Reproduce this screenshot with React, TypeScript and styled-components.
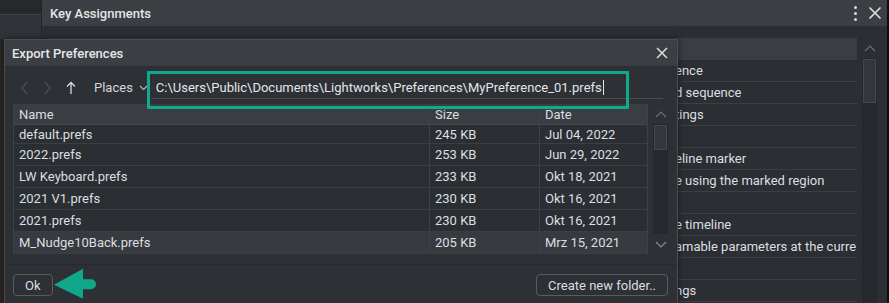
import styled, { createGlobalStyle } from "styled-components"

const GlobalStyle = createGlobalStyle`
  html, body {
    margin: 0;
    padding: 0;
    background: #1c1e21;
  }
  body {
    font-family: Roboto, "Noto Sans", sans-serif;
    font-size: 13px;
    color: #dcdee0;
  }
`

const keyRows = [
  "ence",
  "d sequence",
  "tings",
  "",
  "eline marker",
  "e using the marked region",
  "",
  "e timeline",
  "amable parameters at the curre",
  "",
  "ngs",
]

const files = [
  { name: "default.prefs", size: "245 KB", date: "Jul 04, 2022" },
  { name: "2022.prefs", size: "253 KB", date: "Jun 29, 2022" },
  { name: "LW Keyboard.prefs", size: "233 KB", date: "Okt 18, 2021" },
  { name: "2021 V1.prefs", size: "230 KB", date: "Okt 16, 2021" },
  { name: "2021.prefs", size: "230 KB", date: "Okt 16, 2021" },
  { name: "M_Nudge10Back.prefs", size: "205 KB", date: "Mrz 15, 2021" },
]

const CloseIcon = () => (
  <svg width="12" height="12" viewBox="0 0 12 12">
    <path d="M1 1 L11 11 M11 1 L1 11" stroke="#d6d8da" strokeWidth="1.6" />
  </svg>
)

const Chevron = ({ dir, color }: { dir: "up" | "down" | "left" | "right"; color: string }) => {
  const d = {
    up: "M1 6 L6 1 L11 6",
    down: "M1 1 L6 6 L11 1",
    left: "M6 1 L1 7 L6 13",
    right: "M1 1 L6 7 L1 13",
  }[dir]
  const vertical = dir === "up" || dir === "down"
  return (
    <svg width={vertical ? 12 : 7} height={vertical ? 7 : 14} viewBox={vertical ? "0 0 12 7" : "0 0 7 14"}>
      <path d={d} stroke={color} strokeWidth="1.1" fill="none" />
    </svg>
  )
}

const App = () => (
  <>
    <GlobalStyle />
    <Stage>
      <LeftStrip>
        <StripTop />
        <StripMid />
        <StripLow />
      </LeftStrip>

      <KeyWindow>
        <TitleBar>
          <WindowTitle>Key Assignments</WindowTitle>
          <TitleIcons>
            <Kebab>
              <i />
              <i />
              <i />
            </Kebab>
            <svg width="14" height="14" viewBox="0 0 14 14">
              <path d="M1.5 1.5 L12.5 12.5 M12.5 1.5 L1.5 12.5" stroke="#dcdee0" strokeWidth="1.7" />
            </svg>
          </TitleIcons>
        </TitleBar>
        <KeyBody>
          <KeyList>
            <KeyHeader />
            {keyRows.map((r, i) => (
              <KeyRow key={i}>{r}</KeyRow>
            ))}
          </KeyList>
          <ScrollColumn>
            <ScrollArrow>
              <Chevron dir="up" color="#6d7075" />
            </ScrollArrow>
            <Track $height={260}>
              <Thumb $height={44} />
            </Track>
          </ScrollColumn>
        </KeyBody>
      </KeyWindow>
      <EdgeStrip />

      <Dialog>
        <DialogTitle>
          <span>Export Preferences</span>
          <CloseIcon />
        </DialogTitle>

        <Toolbar>
          <NavButton>
            <Chevron dir="left" color="#55585d" />
          </NavButton>
          <NavButton>
            <Chevron dir="right" color="#55585d" />
          </NavButton>
          <NavButton>
            <svg width="10" height="14" viewBox="0 0 10 14">
              <path d="M5 13 V1.5 M1 5.5 L5 1.5 L9 5.5" stroke="#dadcde" strokeWidth="1.3" fill="none" />
            </svg>
          </NavButton>
          <Places>
            Places
            <svg width="9" height="6" viewBox="0 0 9 6">
              <path d="M1 1 L4.5 4.5 L8 1" stroke="#b9bbbe" strokeWidth="1.1" fill="none" />
            </svg>
          </Places>
          <PathInput>
            C:\Users\Public\Documents\Lightworks\Preferences\MyPreference_01.prefs
            <Caret />
          </PathInput>
        </Toolbar>

        <TableArea>
          <Table>
            <HeadRow>
              <Cell>Name</Cell>
              <Cell>Size</Cell>
              <Cell>Date</Cell>
            </HeadRow>
            {files.map((f, i) => (
              <FileRow key={f.name} $selected={i === files.length - 1}>
                <Cell>{f.name}</Cell>
                <Cell>{f.size}</Cell>
                <Cell>{f.date}</Cell>
              </FileRow>
            ))}
          </Table>
          <DialogScroll>
            <ScrollArrow>
              <Chevron dir="up" color="#6d7075" />
            </ScrollArrow>
            <Track $height={110}>
              <Thumb $height={25} />
            </Track>
            <ScrollArrow>
              <Chevron dir="down" color="#8a8d91" />
            </ScrollArrow>
          </DialogScroll>
        </TableArea>

        <Footer>
          <Button>Ok</Button>
          <Button>Create new folder..</Button>
        </Footer>
      </Dialog>

      <Highlight />
      <Pointer width="44" height="32" viewBox="0 0 44 32">
        <path
          d="M0 16.7 L29 0.7 L29 11.3 L37 11.3 A5 5 0 0 1 37 21.3 L29 21.3 L29 30.7 Z"
          fill="#0fa98a"
        />
      </Pointer>
    </Stage>
  </>
)

// Styled components
const Stage = styled.div`
  position: relative;
  width: 889px;
  height: 303px;
  overflow: hidden;
  display: flex;
  background: #1c1e21;
`

const LeftStrip = styled.div`
  width: 41px;
  display: flex;
  flex-direction: column;
`

const StripTop = styled.div`
  height: 14px;
  background: #26282c;
  border-bottom: 1px solid #3f4246;
`

const StripMid = styled.div`
  height: 24px;
  background: #303337;
`

const StripLow = styled.div`
  flex: 1;
  background: #2a2725;
`

const KeyWindow = styled.div`
  width: 845px;
  display: flex;
  flex-direction: column;
  background: #2b2e33;
  border-left: 1px solid #24262a;
  overflow: hidden;
`

const EdgeStrip = styled.div`
  flex: 1;
  background: #0d0e10;
`

const TitleBar = styled.div`
  height: 27px;
  flex-shrink: 0;
  box-sizing: border-box;
  display: flex;
  align-items: center;
  justify-content: space-between;
  padding: 0 5px 0 8px;
  background: #3b3e43;
  border-bottom: 1px solid #2a2d31;
`

const WindowTitle = styled.span`
  font-size: 13px;
  font-weight: 500;
  color: #e4e6e8;
`

const TitleIcons = styled.div`
  display: flex;
  align-items: center;
  gap: 11px;
`

const Kebab = styled.div`
  display: flex;
  flex-direction: column;
  gap: 3px;
  i {
    width: 3px;
    height: 3px;
    border-radius: 50%;
    background: #d8dadc;
  }
`

const KeyBody = styled.div`
  flex: 1;
  min-height: 0;
  display: flex;
  padding: 11px 0 0 8px;
  gap: 5px;
  overflow: hidden;
`

const KeyList = styled.div`
  width: 807px;
  flex-shrink: 0;
  display: flex;
  flex-direction: column;
`

const KeyHeader = styled.div`
  height: 22px;
  flex-shrink: 0;
  background: #3a3d42;
`

const KeyRow = styled.div`
  height: 22px;
  flex-shrink: 0;
  box-sizing: border-box;
  border-bottom: 1px solid #3b3e43;
  padding-left: 625px;
  line-height: 22px;
  white-space: nowrap;
  overflow: hidden;
  color: #dcdee0;
`

const ScrollColumn = styled.div`
  width: 15px;
  display: flex;
  flex-direction: column;
  align-items: center;
`

const ScrollArrow = styled.div`
  height: 20px;
  flex-shrink: 0;
  display: flex;
  align-items: center;
  justify-content: center;
`

const Track = styled.div<{ $height: number }>`
  width: 15px;
  height: ${(p) => p.$height}px;
  flex-shrink: 0;
  box-sizing: border-box;
  background: #25282c;
  padding: 1px;
`

const Thumb = styled.div<{ $height: number }>`
  height: ${(p) => p.$height}px;
  box-sizing: border-box;
  background: #33363b;
  border: 1px solid #45484d;
`

const Dialog = styled.div`
  position: absolute;
  left: 4px;
  top: 39px;
  width: 674px;
  height: 270px;
  box-sizing: border-box;
  display: flex;
  flex-direction: column;
  background: #2d3035;
  border: 1px solid #4a4d52;
  box-shadow: 0 0 6px rgba(0, 0, 0, 0.5);
`

const DialogTitle = styled.div`
  height: 27px;
  flex-shrink: 0;
  box-sizing: border-box;
  display: flex;
  align-items: center;
  justify-content: space-between;
  padding: 0 9px 0 7px;
  background: #3b3e43;
  border-bottom: 1px solid #2a2d31;
  font-size: 13px;
  font-weight: 500;
  color: #e4e6e8;
`

const Toolbar = styled.div`
  height: 37px;
  flex-shrink: 0;
  box-sizing: border-box;
  display: flex;
  align-items: center;
  padding: 4px 14px 0 8px;
`

const NavButton = styled.div`
  width: 23px;
  display: flex;
  justify-content: center;
  align-items: center;
`

const Places = styled.div`
  display: flex;
  align-items: center;
  gap: 6px;
  margin-left: 12px;
  color: #d3d7dc;
  svg {
    margin-top: 1px;
  }
`

const PathInput = styled.div`
  flex: 1;
  height: 22px;
  margin-left: 3px;
  display: flex;
  align-items: center;
  padding-left: 5px;
  border-bottom: 1px solid #4a4d52;
  color: #e4e6e8;
  white-space: nowrap;
`

const Caret = styled.span`
  width: 1px;
  height: 15px;
  margin-left: 1px;
  background: #e4e6e8;
`

const TableArea = styled.div`
  flex-shrink: 0;
  display: flex;
  gap: 5px;
  padding: 0 9px 0 8px;
`

const Table = styled.div`
  width: 636px;
  display: flex;
  flex-direction: column;
  border-left: 1px solid #3e4146;
  border-right: 1px solid #3e4146;
`

const HeadRow = styled.div`
  height: 21px;
  box-sizing: border-box;
  display: grid;
  grid-template-columns: 415px 110px 1fr;
  background: #3a3d42;
  border-bottom: 1px solid #44474c;
  color: #dcdee0;
`

const FileRow = styled.div<{ $selected?: boolean }>`
  height: 22px;
  box-sizing: border-box;
  display: grid;
  grid-template-columns: 415px 110px 1fr;
  background: ${(p) => (p.$selected ? "#373a3f" : "#2b2e33")};
  border-bottom: 1px solid #3b3e43;
  &:nth-child(2) {
    height: 19px;
  }
`

const Cell = styled.div`
  display: flex;
  align-items: center;
  padding-left: 5px;
  border-left: 1px solid #3e4146;
  white-space: nowrap;
  overflow: hidden;
  &:first-child {
    border-left: none;
  }
`

const DialogScroll = styled.div`
  width: 15px;
  display: flex;
  flex-direction: column;
  align-items: center;
`

const Footer = styled.div`
  margin-top: 10px;
  border-top: 1px solid #26292d;
  display: flex;
  justify-content: space-between;
  padding: 9px 9px 0 8px;
`

const Button = styled.div`
  height: 22px;
  box-sizing: border-box;
  display: flex;
  align-items: center;
  padding: 0 11px;
  border: 1px solid #595c61;
  border-radius: 4px;
  color: #dcdee0;
  background: #2d3035;
`

const Highlight = styled.div`
  position: absolute;
  left: 147px;
  top: 71px;
  width: 482px;
  height: 38px;
  box-sizing: border-box;
  border: 3px solid #10a98b;
`

const Pointer = styled.svg`
  position: absolute;
  left: 54px;
  top: 268px;
`

export default App
